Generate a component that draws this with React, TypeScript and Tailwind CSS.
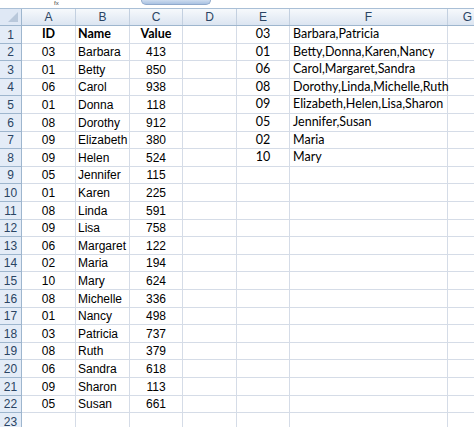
import React from "react";

const data: [string, string, string][] = [
  ["03", "Barbara", "413"],
  ["01", "Betty", "850"],
  ["06", "Carol", "938"],
  ["01", "Donna", "118"],
  ["08", "Dorothy", "912"],
  ["09", "Elizabeth", "380"],
  ["09", "Helen", "524"],
  ["05", "Jennifer", "115"],
  ["01", "Karen", "225"],
  ["08", "Linda", "591"],
  ["09", "Lisa", "758"],
  ["06", "Margaret", "122"],
  ["02", "Maria", "194"],
  ["10", "Mary", "624"],
  ["08", "Michelle", "336"],
  ["01", "Nancy", "498"],
  ["03", "Patricia", "737"],
  ["08", "Ruth", "379"],
  ["06", "Sandra", "618"],
  ["09", "Sharon", "113"],
  ["05", "Susan", "661"],
];

const groups: [string, string][] = [
  ["03", "Barbara,Patricia"],
  ["01", "Betty,Donna,Karen,Nancy"],
  ["06", "Carol,Margaret,Sandra"],
  ["08", "Dorothy,Linda,Michelle,Ruth"],
  ["09", "Elizabeth,Helen,Lisa,Sharon"],
  ["05", "Jennifer,Susan"],
  ["02", "Maria"],
  ["10", "Mary"],
];

// Excel rows aren't whole pixels in this shot, so round each edge
function rowTop(i: number) {
  return Math.round(26 + 17.6 * i);
}

const cell = "shrink-0 flex items-center border-r border-b border-[#d5dce7]";
const head =
  "shrink-0 flex items-center justify-center bg-gradient-to-b from-[#f6f9fc] to-[#dce5f1] border-r border-[#c3d0e0] text-[#2a4463]";
const calibri = "font-['Lato',sans-serif] text-[12.5px]";

export default function App() {
  const rows = Array.from({ length: 24 }, (_, i) => i);

  return (
    <div className="w-[474px] h-[427px] overflow-hidden bg-white text-[12px] text-black font-['Liberation_Sans',Arial,sans-serif]">
      {/* formula bar remnant */}
      <div className="relative h-[9px] bg-white border-b border-[#a9bfd6]">
        <div className="absolute left-[54px] top-0 text-[6px] leading-none text-[#444]">fx</div>
        <div className="absolute left-[141px] top-0 w-[70px] h-[5px] rounded-b-md bg-gradient-to-b from-[#cddcef] to-[#a9c2e2] border border-t-0 border-[#8fa9cc]" />
      </div>

      {/* column header */}
      <div className="flex h-[17px] border-b border-[#9eb6ce]">
        <div className="w-[22px] shrink-0 bg-[#dfe8f5] border-r border-[#9eb6ce] relative">
          <div className="absolute right-[3px] bottom-[3px] w-0 h-0 border-l-[10px] border-l-transparent border-b-[10px] border-b-[#b9c8db]" />
        </div>
        <div className={`${head} w-[54px]`}>A</div>
        <div className={`${head} w-[54px]`}>B</div>
        <div className={`${head} w-[53px]`}>C</div>
        <div className={`${head} w-[54px]`}>D</div>
        <div className={`${head} w-[53px]`}>E</div>
        <div className={`${head} w-[158px]`}>F</div>
        <div className={`${head} w-[40px]`}>G</div>
      </div>

      {rows.map((i) => {
        const d = i >= 1 && i <= 21 ? data[i - 1] : null;
        const g = i < groups.length ? groups[i] : null;
        const bold = i === 0 ? `font-bold ${calibri}` : "";
        return (
          <div key={i} className="flex" style={{ height: rowTop(i + 1) - rowTop(i) }}>
            <div className="w-[22px] shrink-0 flex items-center justify-center bg-[#e4ecf7] border-r border-b border-[#9eb6ce] text-[#2a4463]">
              {i + 1}
            </div>
            <div className={`${cell} w-[54px] justify-center ${bold}`}>{i === 0 ? "ID" : d?.[0]}</div>
            <div className={`${cell} w-[54px] pl-[2px] ${bold}`}>{i === 0 ? "Name" : d?.[1]}</div>
            <div className={`${cell} w-[53px] justify-center ${bold}`}>{i === 0 ? "Value" : d?.[2]}</div>
            <div className={`${cell} w-[54px]`} />
            <div className={`${cell} w-[53px] justify-center ${calibri}`}>{g?.[0]}</div>
            <div className={`${cell} w-[158px] pl-[3px] whitespace-nowrap ${calibri}`}>{g?.[1]}</div>
            <div className={`${cell} w-[40px]`} />
          </div>
        );
      })}
    </div>
  );
}
